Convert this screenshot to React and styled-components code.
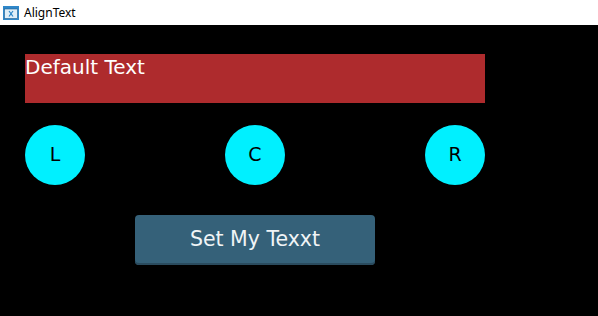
import React from "react";
import styled, { createGlobalStyle } from "styled-components";

const GlobalStyle = createGlobalStyle`
    html, body {
        margin: 0;
        padding: 0;
        background: #000000;
    }
`;

function AppIcon() {
    return (
        <svg width="16" height="14" viewBox="0 0 16 14">
            <rect x="0" y="0" width="16" height="14" fill="#2f87c9" />
            <rect x="1.5" y="3" width="13" height="9.5" fill="#dfeef8" />
            <rect x="1.5" y="3" width="13" height="9.5" fill="none" stroke="#1f5f91" strokeWidth="0.6" />
            <path d="M6 5 L8 7.7 L6 10.5 M10 5 L8 7.7 L10 10.5" stroke="#2f87c9" strokeWidth="1.2" fill="none" />
        </svg>
    );
}

export default function App() {
    const buttons = ["L", "C", "R"];

    return (
        <>
            <GlobalStyle />
            <Window>
                <TitleBar>
                    <AppIcon />
                    <Title>AlignText</Title>
                </TitleBar>
                <Content>
                    <TextBox>Default Text</TextBox>
                    <CircleRow>
                        {buttons.map((b) => (
                            <Circle key={b}>{b}</Circle>
                        ))}
                    </CircleRow>
                    <SetButton>Set My Texxt</SetButton>
                </Content>
            </Window>
        </>
    );
}

const Window = styled.div`
    width: 598px;
    height: 316px;
    display: flex;
    flex-direction: column;
    background: #000000;
    overflow: hidden;
`;

const TitleBar = styled.div`
    height: 25px;
    background: #ffffff;
    display: flex;
    align-items: center;
    padding-left: 3px;
    gap: 5px;
    box-sizing: border-box;
`;

const Title = styled.span`
    font-family: "Noto Sans", "Liberation Sans", sans-serif;
    font-size: 12px;
    color: #000000;
`;

const Content = styled.div`
    flex: 1;
    display: flex;
    flex-direction: column;
    padding: 29px 0 0 25px;
`;

const TextBox = styled.div`
    width: 460px;
    height: 49px;
    background: #ae2b2d;
    color: #ffffff;
    font-family: "DejaVu Sans", Verdana, sans-serif;
    font-size: 20px;
    line-height: 27px;
`;

const CircleRow = styled.div`
    width: 460px;
    display: flex;
    justify-content: space-between;
    margin-top: 22px;
`;

const Circle = styled.div`
    width: 60px;
    height: 60px;
    border-radius: 50%;
    background: #00f0ff;
    color: #000000;
    display: flex;
    align-items: center;
    justify-content: center;
    padding-bottom: 2px;
    box-sizing: border-box;
    font-family: "DejaVu Sans", Verdana, sans-serif;
    font-size: 19px;
`;

const SetButton = styled.button`
    margin: 30px 0 0 110px;
    width: 240px;
    height: 50px;
    padding: 0 0 3px;
    box-sizing: border-box;
    border: none;
    border-radius: 4px;
    background: #356179;
    box-shadow: inset 0 -2px 0 #2a4b5e;
    color: #f0f4f6;
    font-family: "DejaVu Sans", Verdana, sans-serif;
    font-size: 20.5px;
    display: flex;
    align-items: center;
    justify-content: center;
`;
